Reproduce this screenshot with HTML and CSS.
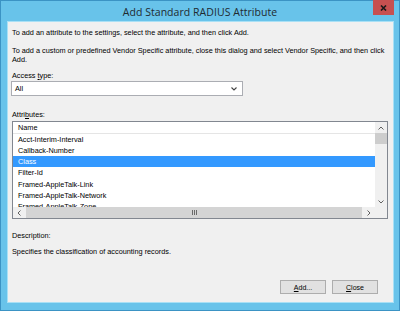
FILE: index.html
```html
<!DOCTYPE html>
<html>
<head>
<meta charset="utf-8">
<link rel="stylesheet" href="styles.css">
</head>
<body>
<div class="window">
  <div class="titlebar">
    <span class="title">Add Standard RADIUS Attribute</span>
    <div class="close">
      <svg width="7" height="6" viewBox="0 0 7 6"><path d="M1 0.5 L6 5.5 M6 0.5 L1 5.5" stroke="#1a1a1a" stroke-width="1.6"/></svg>
    </div>
  </div>
  <div class="content">
    <p class="p1">To add an attribute to the settings, select the attribute, and then click Add.</p>
    <p class="p2">To add a custom or predefined Vendor Specific attribute, close this dialog and select Vendor Specific, and then click Add.</p>
    <div class="label l-access">Access <u>t</u>ype:</div>
    <div class="combo">
      <span class="combo-text">All</span>
      <svg class="chev" width="6" height="4" viewBox="0 0 6 4"><path d="M0.5 0.5 L3 3 L5.5 0.5" fill="none" stroke="#444" stroke-width="1.1"/></svg>
    </div>
    <div class="label l-attr">Attri<u>b</u>utes:</div>
    <div class="list">
      <div class="list-main">
        <div class="list-body">
          <div class="list-head">Name</div>
          <div class="row">Acct-Interim-Interval</div>
          <div class="row">Callback-Number</div>
          <div class="row sel">Class</div>
          <div class="row">Filter-Id</div>
          <div class="row">Framed-AppleTalk-Link</div>
          <div class="row">Framed-AppleTalk-Network</div>
          <div class="row">Framed-AppleTalk-Zone</div>
        </div>
        <div class="vscroll">
          <div class="sbtn"><svg width="6" height="4" viewBox="0 0 6 4"><path d="M0.5 3.5 L3 1 L5.5 3.5" fill="none" stroke="#606060" stroke-width="1"/></svg></div>
          <div class="vthumb"></div>
          <div class="vtrack"></div>
          <div class="sbtn"><svg width="6" height="4" viewBox="0 0 6 4"><path d="M0.5 0.5 L3 3 L5.5 0.5" fill="none" stroke="#606060" stroke-width="1"/></svg></div>
        </div>
      </div>
      <div class="hscroll">
        <div class="hbtn"><svg width="4" height="6" viewBox="0 0 4 6"><path d="M3.5 0.5 L1 3 L3.5 5.5" fill="none" stroke="#606060" stroke-width="1"/></svg></div>
        <div class="hthumb"><span class="grip"></span><span class="grip"></span><span class="grip"></span></div>
        <div class="hbtn"><svg width="4" height="6" viewBox="0 0 4 6"><path d="M0.5 0.5 L3 3 L0.5 5.5" fill="none" stroke="#606060" stroke-width="1"/></svg></div>
        <div class="corner"></div>
      </div>
    </div>
    <div class="label l-desc">Description:</div>
    <p class="desc">Specifies the classification of accounting records.</p>
    <div class="buttons">
      <div class="btn"><u>A</u>dd...</div>
      <div class="btn"><u>C</u>lose</div>
    </div>
  </div>
</div>
</body>
</html>
```
FILE: styles.css
```css
* { box-sizing: border-box; }
html, body { margin: 0; padding: 0; }
body {
  width: 400px;
  height: 311px;
  overflow: hidden;
  font-family: "Liberation Sans", Arial, sans-serif;
  color: #000;
}
.window {
  position: relative;
  width: 400px;
  height: 311px;
  background: #68c3ea;
  border: 1px solid #3b93c4;
  display: flex;
  flex-direction: column;
}
.titlebar {
  height: 20px;
  display: flex;
  align-items: center;
  justify-content: center;
  flex: none;
}
.title {
  font-family: "Open Sans", "Liberation Sans", sans-serif;
  font-size: 10.5px;
  color: #1f2a30;
  margin-top: 1px;
  letter-spacing: 0.05px;
}
.close {
  position: absolute;
  top: -1px;
  right: 5px;
  width: 21px;
  height: 15px;
  background: #c75050;
  display: flex;
  align-items: center;
  justify-content: center;
}
.content {
  flex: 1;
  margin: 0 5px 7px 6px;
  background: #f0f0f0;
  border: 1px solid #a9e0f5;
  display: flex;
  flex-direction: column;
  padding: 6px 0 0 4px;
  font-size: 7.3px;
}
p { margin: 0; line-height: 9px; }
.p2 { margin-top: 9px; padding-right: 8px; }
.label { line-height: 9px; }
.l-access { margin-top: 7px; }
.combo {
  margin-top: 1px;
  margin-left: -1px;
  width: 232px;
  height: 15px;
  background: #fff;
  border: 1px solid #abadb3;
  display: flex;
  align-items: center;
  padding: 0 5px 0 3px;
}
.combo-text { flex: 1; }
.chev { flex: none; }
.l-attr { margin-top: 14px; }
.list {
  margin-top: 2px;
  width: 376px;
  height: 98px;
  border: 1px solid #828790;
  background: #fff;
  display: flex;
  flex-direction: column;
}
.list-main {
  flex: 1;
  display: flex;
  min-height: 0;
}
.list-body {
  flex: 1;
  overflow: hidden;
}
.list-head {
  height: 11.5px;
  line-height: 11px;
  padding-left: 5px;
  border-bottom: 1px solid #e5e5e5;
}
.row {
  height: 11.3px;
  line-height: 11.3px;
  padding-left: 5px;
  white-space: nowrap;
}
.row.sel {
  background: #3399ff;
  color: #fff;
}
.vscroll {
  width: 12px;
  background: #f0f0f0;
  display: flex;
  flex-direction: column;
}
.sbtn {
  height: 11px;
  display: flex;
  align-items: center;
  justify-content: center;
  flex: none;
}
.vthumb {
  height: 11px;
  background: #cdcdcd;
  flex: none;
}
.vtrack { flex: 1; }
.hscroll {
  height: 11px;
  display: flex;
  background: #f0f0f0;
  flex: none;
}
.hbtn {
  width: 12px;
  display: flex;
  align-items: center;
  justify-content: center;
  flex: none;
}
.hthumb {
  flex: 1;
  background: #d4d4d4;
  margin: 0 1px;
  display: flex;
  align-items: center;
  justify-content: center;
  gap: 1px;
}
.grip {
  width: 1px;
  height: 5px;
  background: #6a6a6a;
}
.corner { width: 12px; flex: none; background: #f0f0f0; }
.l-desc { margin-top: 12px; }
.desc { margin-top: 7px; }
.buttons {
  margin-top: auto;
  margin-bottom: 8px;
  margin-right: 15px;
  display: flex;
  justify-content: flex-end;
  gap: 6px;
}
.btn {
  width: 46px;
  height: 14px;
  border: 1px solid #adadad;
  background: #e1e1e1;
  display: flex;
  align-items: center;
  justify-content: center;
  font-size: 7px;
}
```
